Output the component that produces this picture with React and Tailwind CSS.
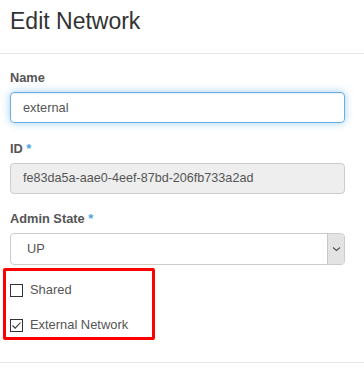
export default function App() {
  return (
    <div className="w-[364px] h-[374px] bg-white overflow-hidden font-['Liberation_Sans',Arial,sans-serif]">
      <div className="h-[54px] border-b border-[#e5e5e5] px-[10px] pt-[7px]">
        <h1 className="text-[23px] leading-[28px] text-[#333]">Edit Network</h1>
      </div>

      <div className="px-[10px] pt-[15px]">
        <label className="block text-[12.8px] leading-[18px] font-bold text-[#555] mb-[5px]">Name</label>
        <div className="w-[335px] h-[31px] rounded-[4px] border border-[#66afe9] px-[12px] flex items-center text-[12.8px] text-[#555] shadow-[inset_0_1px_1px_rgba(0,0,0,0.075),0_0_8px_rgba(102,175,233,0.6)]">
          external
        </div>

        <label className="block mt-[17px] text-[12.8px] leading-[18px] font-bold text-[#555] mb-[5px]">
          ID <span className="text-[#4aa3df]">*</span>
        </label>
        <div className="w-[335px] h-[31px] rounded-[4px] border border-[#ccc] bg-[#eee] px-[12px] flex items-center text-[12.6px] text-[#555]">
          fe83da5a-aae0-4eef-87bd-206fb733a2ad
        </div>

        <label className="block mt-[16px] text-[12.8px] leading-[18px] font-bold text-[#555] mb-[5px]">
          Admin State <span className="text-[#4aa3df]">*</span>
        </label>
        <div className="w-[335px] h-[32px] rounded-[4px] border border-[#ccc] flex items-stretch text-[12.8px] text-[#555] overflow-hidden">
          <span className="flex-1 flex items-center pl-[16px]">UP</span>
          <span className="w-[17px] bg-[#e3e3e3] border-l border-[#c8c8c8] flex items-center justify-center">
            <svg width="9" height="6" viewBox="0 0 9 6">
              <path d="M1 1.5 L4.5 4.5 L8 1.5" fill="none" stroke="#555" strokeWidth="1.2" />
            </svg>
          </span>
        </div>
      </div>

      <div className="ml-[3px] mt-[3px] w-[152px] h-[72px] rounded-[2px] border-[3px] border-[#ff0000] pl-[4px] pt-[10px] flex flex-col gap-[17px]">
        <div className="flex items-center h-[18px] gap-[7px]">
          <span className="w-[13px] h-[13px] border border-[#333] bg-white" />
          <span className="text-[12.9px] text-[#555]">Shared</span>
        </div>
        <div className="flex items-center h-[18px] gap-[7px]">
          <span className="w-[13px] h-[13px] border border-[#333] bg-white flex items-center justify-center">
            <svg width="11" height="11" viewBox="0 0 11 11">
              <path d="M1.5 5.5 L4.2 8.2 L9.5 2.5" fill="none" stroke="#333" strokeWidth="1.1" />
            </svg>
          </span>
          <span className="text-[12.9px] text-[#555]">External Network</span>
        </div>
      </div>

      <div className="mt-[22px] border-t border-[#e5e5e5]" />
    </div>
  );
}
